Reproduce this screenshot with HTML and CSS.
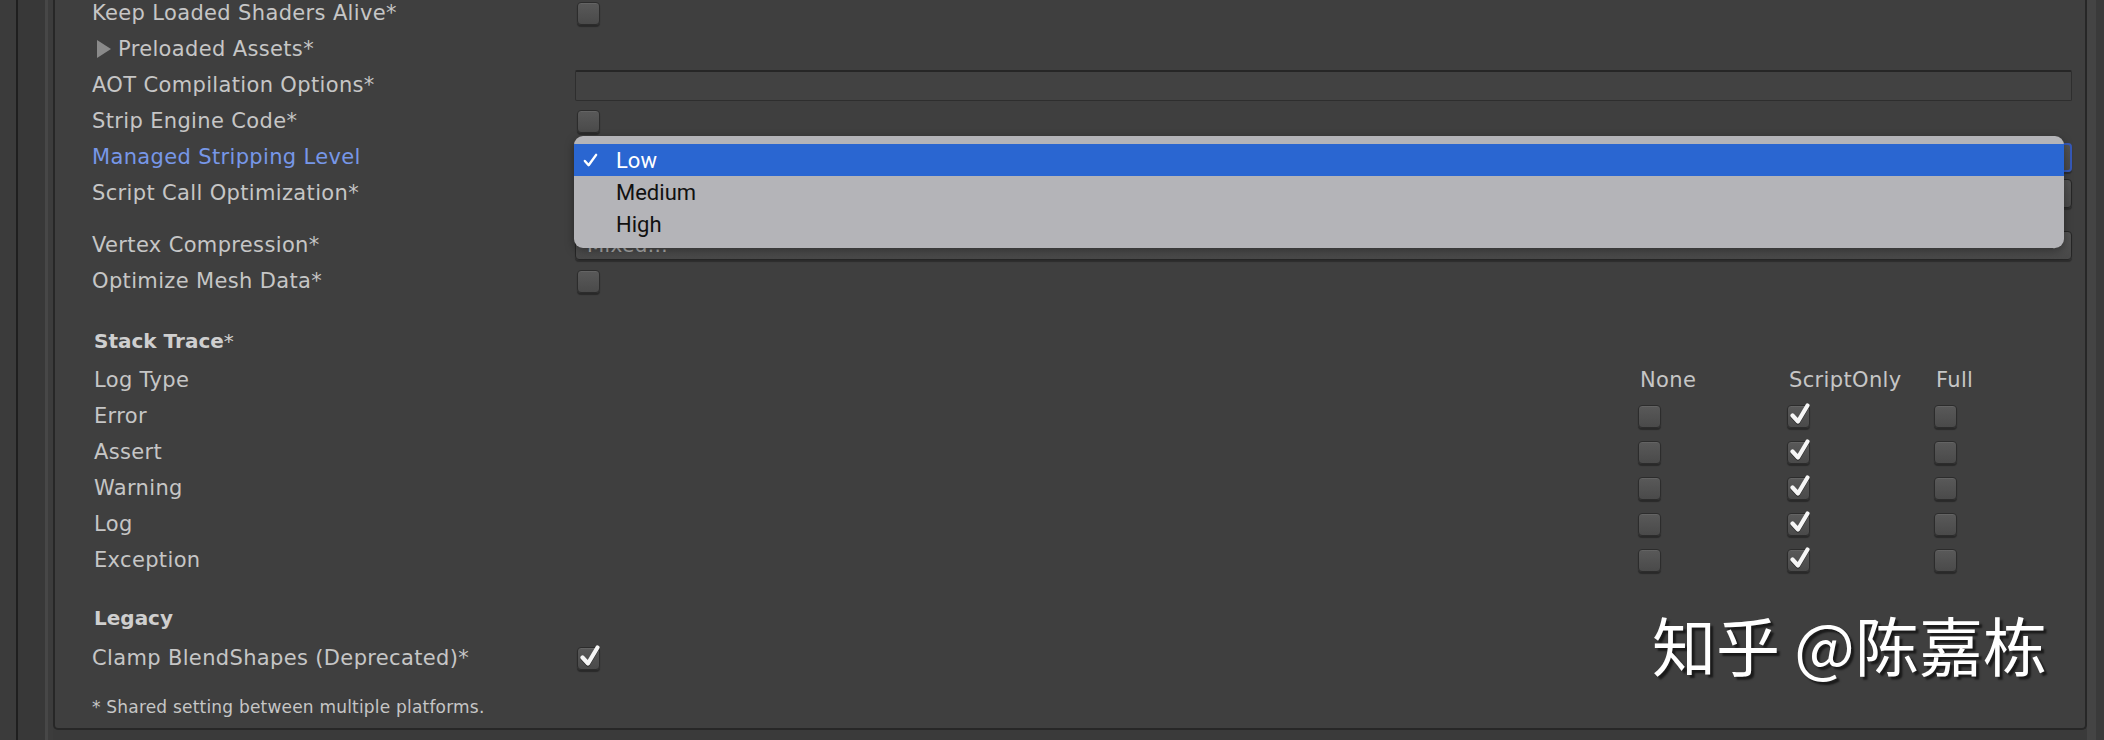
FILE: index.html
```html
<!DOCTYPE html>
<html>
<head>
<meta charset="utf-8">
<link rel="stylesheet" href="styles.css">
</head>
<body>
<div class="window">
  <div class="gutter-a"></div>
  <div class="gutter-b"></div>
  <div class="gutter-c"></div>
  <div class="panel">
    <div class="list">
      <div class="row"><span class="label">Keep Loaded Shaders Alive*</span><span class="cb"></span></div>
      <div class="row"><span class="label fold"><span class="tri"></span>Preloaded Assets*</span></div>
      <div class="row"><span class="label">AOT Compilation Options*</span><span class="field"></span></div>
      <div class="row"><span class="label">Strip Engine Code*</span><span class="cb"></span></div>
      <div class="row"><span class="label active">Managed Stripping Level</span><span class="dd focus"><span class="arrow"></span></span></div>
      <div class="row"><span class="label">Script Call Optimization*</span><span class="dd"><span class="arrow"></span></span></div>
      <div class="spacer"></div>
      <div class="row"><span class="label">Vertex Compression*</span><span class="dd">Mixed...<span class="arrow"></span></span></div>
      <div class="row"><span class="label">Optimize Mesh Data*</span><span class="cb"></span></div>

      <div class="heading heading-trace">Stack Trace<span class="star">*</span></div>
      <div class="trace head">
        <span class="tlabel">Log Type</span>
        <span class="col">None</span>
        <span class="col">ScriptOnly</span>
        <span class="col">Full</span>
      </div>
      <div class="trace"><span class="tlabel">Error</span><span class="cell"><span class="cb"></span></span><span class="cell"><span class="cb on"><svg viewBox="0 0 26 26"><path d="M5.5 13.5 L11 19.5 L20.5 3.5"/></svg></span></span><span class="cell"><span class="cb"></span></span></div>
      <div class="trace"><span class="tlabel">Assert</span><span class="cell"><span class="cb"></span></span><span class="cell"><span class="cb on"><svg viewBox="0 0 26 26"><path d="M5.5 13.5 L11 19.5 L20.5 3.5"/></svg></span></span><span class="cell"><span class="cb"></span></span></div>
      <div class="trace"><span class="tlabel">Warning</span><span class="cell"><span class="cb"></span></span><span class="cell"><span class="cb on"><svg viewBox="0 0 26 26"><path d="M5.5 13.5 L11 19.5 L20.5 3.5"/></svg></span></span><span class="cell"><span class="cb"></span></span></div>
      <div class="trace"><span class="tlabel">Log</span><span class="cell"><span class="cb"></span></span><span class="cell"><span class="cb on"><svg viewBox="0 0 26 26"><path d="M5.5 13.5 L11 19.5 L20.5 3.5"/></svg></span></span><span class="cell"><span class="cb"></span></span></div>
      <div class="trace"><span class="tlabel">Exception</span><span class="cell"><span class="cb"></span></span><span class="cell"><span class="cb on"><svg viewBox="0 0 26 26"><path d="M5.5 13.5 L11 19.5 L20.5 3.5"/></svg></span></span><span class="cell"><span class="cb"></span></span></div>

      <div class="heading heading-legacy">Legacy</div>
      <div class="row clamp"><span class="label">Clamp BlendShapes (Deprecated)*</span><span class="cb on"><svg viewBox="0 0 26 26"><path d="M5.5 13.5 L11 19.5 L20.5 3.5"/></svg></span></div>
      <div class="footer">* Shared setting between multiple platforms.</div>
    </div>
  </div>
  <div class="scroll"></div>
  <div class="edge"></div>

  <div class="popup">
    <div class="item sel"><svg class="tick" viewBox="0 0 16 16"><path d="M2 8.5 L6 13 L14 2"/></svg>Low</div>
    <div class="item">Medium</div>
    <div class="item">High</div>
  </div>

  <div class="watermark">知乎 @陈嘉栋</div>
</div>
</body>
</html>
```

FILE: styles.css
```css
html, body {
  margin: 0;
  padding: 0;
}
body {
  width: 2104px;
  height: 740px;
  overflow: hidden;
  background: #3a3a3a;
  font-family: "DejaVu Sans", "Noto Sans", sans-serif;
  color: #c6c6c6;
}
.window {
  position: relative;
  display: flex;
  align-items: flex-start;
  width: 2104px;
  height: 740px;
}
.gutter-a {
  width: 16px;
  height: 740px;
  background: #3b3b3b;
}
.gutter-b {
  width: 27px;
  height: 740px;
  border-left: 2px solid #1f1f1f;
  border-right: 3px solid #474747;
  background: #383838;
}
.gutter-c {
  width: 5px;
  height: 740px;
  background: #3c3c3c;
}
.panel {
  flex: 1;
  height: 730px;
  box-sizing: border-box;
  border-left: 2px solid #272727;
  border-right: 2px solid #272727;
  border-bottom: 2px solid #272727;
  border-radius: 0 0 5px 5px;
  background: #3f3f3f;
  padding: 0 13px 0 37px;
  overflow: hidden;
}
.scroll {
  width: 9px;
  height: 740px;
  background: #444444;
}
.edge {
  width: 8px;
  height: 740px;
  background: #3a3a3a;
}
.list {
  margin-top: -5px;
  display: flex;
  flex-direction: column;
}
.row {
  display: grid;
  grid-template-columns: 483px 1fr;
  align-items: center;
  height: 36px;
  font-size: 21px;
  letter-spacing: 0.35px;
}
.label {
  white-space: nowrap;
}
.label.active {
  color: #7797e8;
}
.fold {
  display: flex;
  align-items: center;
  padding-left: 5px;
}
.tri {
  width: 0;
  height: 0;
  border-top: 9px solid transparent;
  border-bottom: 9px solid transparent;
  border-left: 14px solid #8a8a8a;
  margin-right: 7px;
}
.spacer {
  height: 16px;
}
.cb {
  position: relative;
  display: block;
  width: 23px;
  height: 23px;
  box-sizing: border-box;
  margin-left: 2px;
  border: 1px solid #2c2c2c;
  border-radius: 4px;
  background: linear-gradient(#595959, #4a4a4a);
  box-shadow: 0 2px 1px rgba(0, 0, 0, 0.35), inset 0 1px 0 rgba(255, 255, 255, 0.07);
}
.cb svg {
  position: absolute;
  left: -1px;
  top: -4px;
  width: 26px;
  height: 26px;
  overflow: visible;
  filter: drop-shadow(0 1px 0 rgba(0, 0, 0, 0.5));
}
.cb svg path {
  fill: none;
  stroke: #f6f6f6;
  stroke-width: 4.2;
  stroke-linecap: round;
  stroke-linejoin: round;
}
.field {
  display: block;
  height: 31px;
  box-sizing: border-box;
  border: 1px solid #2e2e2e;
  border-top: 2px solid #262626;
  border-radius: 2px;
  background: #424242;
}
.dd {
  position: relative;
  display: flex;
  align-items: center;
  height: 29px;
  box-sizing: border-box;
  padding-left: 11px;
  border: 1px solid #262626;
  border-radius: 4px;
  background: linear-gradient(#535353, #494949);
  box-shadow: 0 2px 1px rgba(0, 0, 0, 0.3);
  color: #b0b0b0;
  font-size: 20px;
}
.dd.focus {
  border: 2px solid #3659b8;
}
.arrow {
  position: absolute;
  right: 12px;
  top: 11px;
  width: 0;
  height: 0;
  border-left: 5px solid transparent;
  border-right: 5px solid transparent;
  border-top: 6px solid #a0a0a0;
}
.heading {
  height: 36px;
  display: flex;
  align-items: center;
  padding-left: 2px;
  font-weight: bold;
  font-size: 20px;
  color: #cfcfcf;
}
.heading .star {
  font-weight: normal;
}
.heading-trace {
  margin-top: 24px;
}
.heading-legacy {
  margin-top: 22px;
}
.trace {
  display: grid;
  grid-template-columns: 1fr 149px 147px 138px;
  align-items: center;
  height: 36px;
  font-size: 21px;
  letter-spacing: 0.35px;
}
.trace.head {
  margin-top: 3px;
}
.trace .tlabel {
  padding-left: 2px;
}
.trace .col {
  padding-left: 2px;
}
.trace .cell .cb {
  margin-left: 0;
}
.clamp {
  margin-top: 4px;
}
.footer {
  height: 36px;
  margin-top: 13px;
  display: flex;
  align-items: center;
  font-size: 17px;
  letter-spacing: 0.2px;
}
.popup {
  position: absolute;
  left: 574px;
  top: 136px;
  width: 1490px;
  height: 112px;
  box-sizing: border-box;
  padding: 8px 0;
  border-radius: 9px;
  background: #b4b4b8;
  box-shadow: 0 3px 10px rgba(0, 0, 0, 0.35);
  font-family: Roboto, "Liberation Sans", sans-serif;
  font-size: 22px;
  color: #111111;
}
.item {
  position: relative;
  display: flex;
  align-items: center;
  height: 32px;
  padding-left: 42px;
}
.item.sel {
  background: #2a66d1;
  color: #ffffff;
}
.tick {
  position: absolute;
  left: 9px;
  top: 9px;
  width: 15px;
  height: 15px;
}
.tick path {
  fill: none;
  stroke: #ffffff;
  stroke-width: 2.6;
  stroke-linecap: round;
  stroke-linejoin: round;
}
.watermark {
  position: absolute;
  left: 1652px;
  top: 611px;
  font-family: "Noto Sans CJK SC", sans-serif;
  font-size: 64px;
  line-height: 1;
  color: #ffffff;
  text-shadow: 3px 3px 2px rgba(0, 0, 0, 0.6);
  white-space: nowrap;
}
```
